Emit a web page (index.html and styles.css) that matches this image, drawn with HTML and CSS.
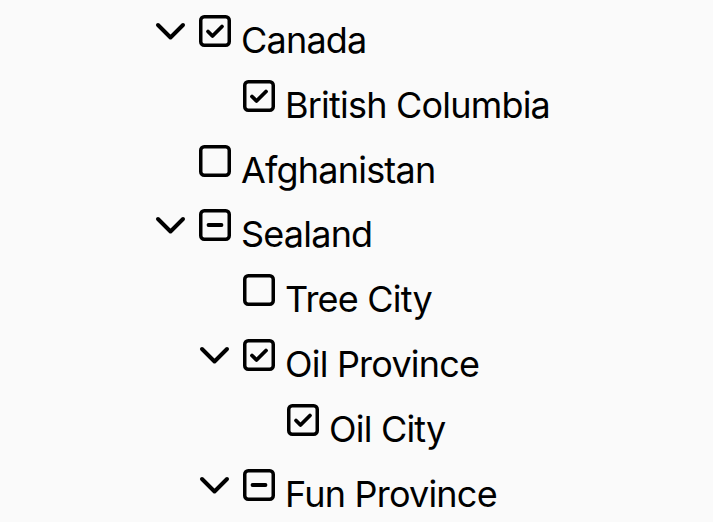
FILE: index.html
```html
<!DOCTYPE html>
<html lang="en">
<head>
<meta charset="utf-8">
<title>Checkbox tree</title>
<link rel="stylesheet" href="styles.css">
</head>
<body>
<ul class="tree root">
  <li>
    <div class="row">
      <span class="toggle"><svg viewBox="0 0 44 32" width="44" height="32"><path d="M3 10 L15.5 22.5 L28 10"/></svg></span>
      <span class="cb"><svg viewBox="0 0 32 32" width="32" height="32"><rect x="1.75" y="1.75" width="28.5" height="28.5" rx="3.5"/><path d="M9 16.5 L13.5 21 L23 11.5"/></svg></span>
      <span class="label">Canada</span>
    </div>
    <ul class="tree">
      <li>
        <div class="row">
          <span class="toggle"></span>
          <span class="cb"><svg viewBox="0 0 32 32" width="32" height="32"><rect x="1.75" y="1.75" width="28.5" height="28.5" rx="3.5"/><path d="M9 16.5 L13.5 21 L23 11.5"/></svg></span>
          <span class="label">British Columbia</span>
        </div>
      </li>
    </ul>
  </li>
  <li>
    <div class="row">
      <span class="toggle"></span>
      <span class="cb"><svg viewBox="0 0 32 32" width="32" height="32"><rect x="1.75" y="1.75" width="28.5" height="28.5" rx="3.5"/></svg></span>
      <span class="label">Afghanistan</span>
    </div>
  </li>
  <li>
    <div class="row">
      <span class="toggle"><svg viewBox="0 0 44 32" width="44" height="32"><path d="M3 10 L15.5 22.5 L28 10"/></svg></span>
      <span class="cb"><svg viewBox="0 0 32 32" width="32" height="32"><rect x="1.75" y="1.75" width="28.5" height="28.5" rx="3.5"/><path d="M9.5 16 H22.5"/></svg></span>
      <span class="label">Sealand</span>
    </div>
    <ul class="tree">
      <li>
        <div class="row">
          <span class="toggle"></span>
          <span class="cb"><svg viewBox="0 0 32 32" width="32" height="32"><rect x="1.75" y="1.75" width="28.5" height="28.5" rx="3.5"/></svg></span>
          <span class="label">Tree City</span>
        </div>
      </li>
      <li>
        <div class="row">
          <span class="toggle"><svg viewBox="0 0 44 32" width="44" height="32"><path d="M3 10 L15.5 22.5 L28 10"/></svg></span>
          <span class="cb"><svg viewBox="0 0 32 32" width="32" height="32"><rect x="1.75" y="1.75" width="28.5" height="28.5" rx="3.5"/><path d="M9 16.5 L13.5 21 L23 11.5"/></svg></span>
          <span class="label">Oil Province</span>
        </div>
        <ul class="tree">
          <li>
            <div class="row">
              <span class="toggle"></span>
              <span class="cb"><svg viewBox="0 0 32 32" width="32" height="32"><rect x="1.75" y="1.75" width="28.5" height="28.5" rx="3.5"/><path d="M9 16.5 L13.5 21 L23 11.5"/></svg></span>
              <span class="label">Oil City</span>
            </div>
          </li>
        </ul>
      </li>
      <li>
        <div class="row">
          <span class="toggle"><svg viewBox="0 0 44 32" width="44" height="32"><path d="M3 10 L15.5 22.5 L28 10"/></svg></span>
          <span class="cb"><svg viewBox="0 0 32 32" width="32" height="32"><rect x="1.75" y="1.75" width="28.5" height="28.5" rx="3.5"/><path d="M9.5 16 H22.5"/></svg></span>
          <span class="label">Fun Province</span>
        </div>
      </li>
    </ul>
  </li>
</ul>
</body>
</html>
```

FILE: styles.css
```css
html, body {
  background: #fafafa;
}
body {
  margin: 8px;
  font-family: "Inter", "Noto Sans", sans-serif;
  font-size: 36px;
  color: #000;
  overflow: hidden;
}
.tree {
  list-style: none;
  margin: 0;
  padding: 0 0 0 44px;
}
.tree.root {
  padding-left: 147px;
}
.row {
  display: flex;
  align-items: flex-start;
  height: 64.8px;
  line-height: 64.8px;
  white-space: nowrap;
}
.toggle {
  flex: 0 0 44px;
  height: 32px;
  margin-top: 7px;
}
.toggle svg {
  display: block;
  fill: none;
  stroke: #000;
  stroke-width: 4;
  stroke-linecap: round;
  stroke-linejoin: round;
}
.cb {
  flex: 0 0 32px;
  height: 32px;
  margin-top: 7px;
  margin-right: 10px;
}
.cb svg {
  display: block;
  fill: none;
  stroke: #000;
  stroke-width: 3.5;
  stroke-linecap: round;
  stroke-linejoin: round;
}
.cb svg path {
  stroke-width: 3.8;
}
.label {
  display: block;
  letter-spacing: -0.022em;
}
```
